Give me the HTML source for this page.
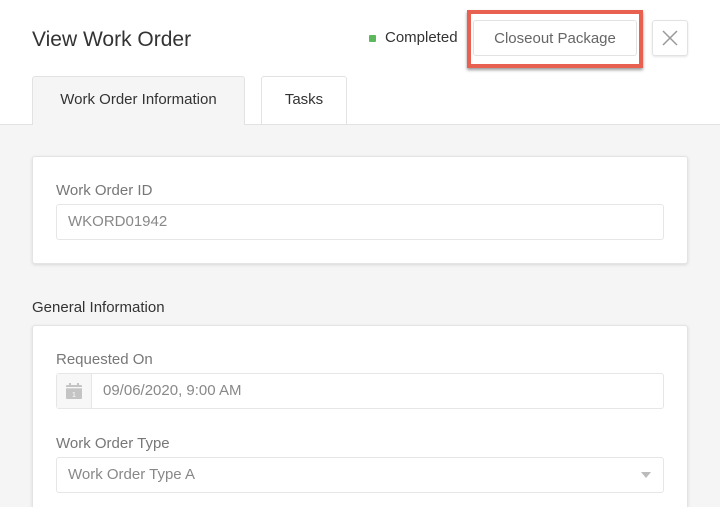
<!DOCTYPE html>
<html style="overflow:hidden;width:720px;height:507px"><head><style>
*{box-sizing:border-box;margin:0;padding:0}
body{width:720px;height:507px;overflow:hidden;background:#fff;font-family:"Liberation Sans",sans-serif;position:relative;color:#333}
.a{position:absolute}
.gray{left:0;top:124px;width:720px;height:383px;background:#f5f5f5;border-top:1px solid #e2e2e2}
.card{background:#fff;border:1px solid #e4e4e4;border-radius:3px;box-shadow:0 1px 3px rgba(0,0,0,.12)}
.lbl{font-size:15px;color:#777}
.inp{border:1px solid #e6e6e6;border-radius:3px;height:36px;font-size:15px;color:#888;padding:0 11px;line-height:34px;background:#fff}
</style></head><body>
<div class="a" style="left:32px;top:28px;font-size:21px;color:#333">View Work Order</div>
<div class="a" style="left:369px;top:35px;width:7px;height:7px;background:#5cb85c;border-radius:1px"></div>
<div class="a" style="left:385px;top:29px;font-size:15px;color:#333">Completed</div>
<div class="a" style="left:467px;top:10px;width:176px;height:58px;border:4px solid #e8604f;box-shadow:0 2px 3px rgba(0,0,0,.4)"></div>
<div class="a" style="left:473px;top:20px;width:164px;height:36px;border:1px solid #e2e2e2;border-radius:3px;background:#fff;font-size:15px;color:#666;text-align:center;line-height:36px">Closeout Package</div>
<div class="a" style="left:652px;top:20px;width:36px;height:36px;border:1px solid #e2e2e2;border-radius:3px;box-shadow:0 1px 2px rgba(0,0,0,.1)">
<svg width="34" height="34"><path d="M10 10L24 24M24 10L10 24" stroke="#999" stroke-width="1.5"/></svg></div>
<div class="a gray"></div>
<div class="a" style="left:32px;top:76px;width:213px;height:49px;background:#f5f5f5;border:1px solid #e2e2e2;border-bottom:none;border-radius:3px 3px 0 0;font-size:15px;color:#333;text-align:center;line-height:46px">Work Order Information</div>
<div class="a" style="left:261px;top:76px;width:86px;height:48px;background:#fff;border:1px solid #e2e2e2;border-bottom:none;border-radius:3px 3px 0 0;font-size:15px;color:#333;text-align:center;line-height:46px">Tasks</div>
<div class="a card" style="left:32px;top:156px;width:656px;height:108px"></div>
<div class="a lbl" style="left:56px;top:182px">Work Order ID</div>
<div class="a inp" style="left:56px;top:204px;width:608px">WKORD01942</div>
<div class="a" style="left:32px;top:299px;font-size:15px;color:#333">General Information</div>
<div class="a card" style="left:32px;top:325px;width:656px;height:190px"></div>
<div class="a lbl" style="left:56px;top:351px">Requested On</div>
<div class="a inp" style="left:56px;top:373px;width:608px;padding-left:46px">09/06/2020, 9:00 AM</div>
<div class="a" style="left:57px;top:374px;width:35px;height:34px;background:#f7f7f7;border-right:1px solid #e6e6e6"></div>
<svg class="a" style="left:65px;top:382px" width="18" height="18"><rect x="1" y="3" width="16" height="14" rx="1" fill="#c4c4c4"/><rect x="4" y="1" width="2" height="4" fill="#c4c4c4"/><rect x="12" y="1" width="2" height="4" fill="#c4c4c4"/><rect x="1" y="5" width="16" height="1.3" fill="#f7f7f7"/><text x="9" y="15" font-size="7" fill="#fff" text-anchor="middle" font-family="Liberation Sans">1</text></svg>
<div class="a lbl" style="left:56px;top:435px">Work Order Type</div>
<div class="a inp" style="left:56px;top:457px;width:608px">Work Order Type A</div>
<div class="a" style="left:641px;top:472px;border-left:5px solid transparent;border-right:5px solid transparent;border-top:6px solid #bbb"></div>
</body></html>
